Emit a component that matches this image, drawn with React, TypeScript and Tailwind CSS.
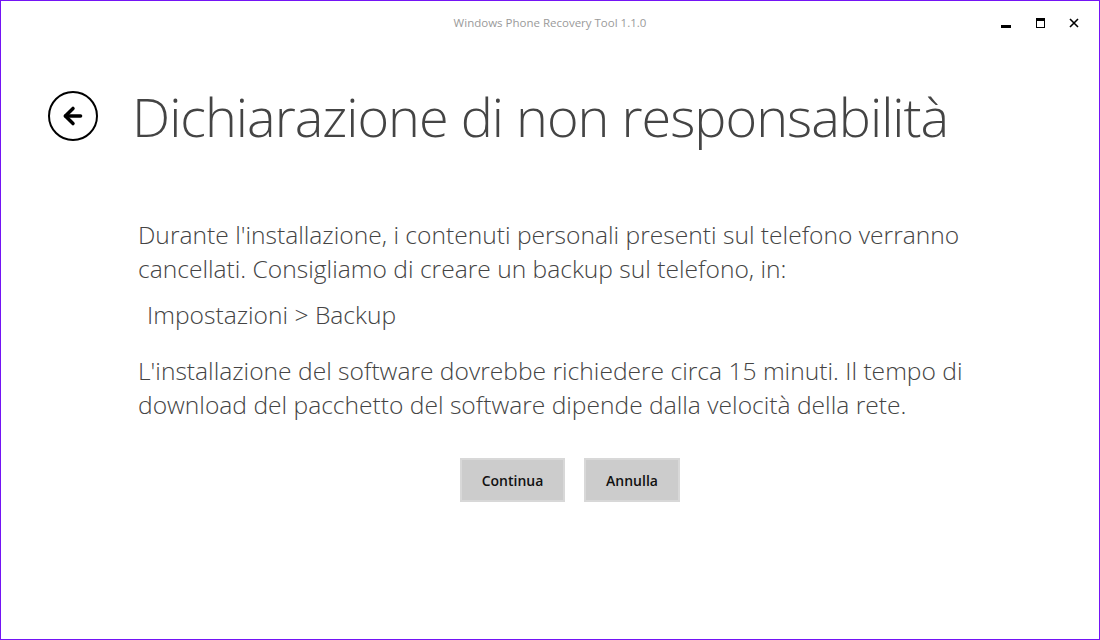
import { ArrowLeft } from 'lucide-react'

export default function App() {
  return (
    <div className="w-[1100px] h-[640px] bg-white border border-[#7414f5] flex flex-col font-['Open_Sans',sans-serif] overflow-hidden">
      {/* Title bar */}
      <div className="h-[44px] flex items-start relative">
        <div className="flex-1 text-center pt-[13px] text-[11.5px] text-[#9a9a9a]">Windows Phone Recovery Tool 1.1.0</div>
        <div className="absolute right-0 top-0 flex items-center h-[44px] pr-[18px] gap-[20px]">
          <div className="w-[14px] h-[14px] flex items-end justify-center pb-[2px]">
            <div className="w-[10px] h-[3px] bg-black" />
          </div>
          <div className="w-[14px] h-[14px] flex items-center justify-center">
            <div className="w-[9px] h-[10px] border border-black border-t-[3px]" />
          </div>
          <svg width="14" height="14" viewBox="0 0 14 14">
            <path d="M3 3 L11 11 M11 3 L3 11" stroke="black" strokeWidth="1.6" />
          </svg>
        </div>
      </div>

      {/* Header */}
      <div className="flex items-center pl-[47px] mt-[44px]">
        <div className="w-[50px] h-[50px] rounded-full border-[2px] border-black flex items-center justify-center">
          <ArrowLeft className="w-[26px] h-[26px] text-black" strokeWidth={3.2} />
        </div>
        <h1 className="ml-[34px] text-[54px] font-light text-[#444] leading-none tracking-[-1px]">
          Dichiarazione di non responsabilità
        </h1>
      </div>

      {/* Body */}
      <div className="pl-[137px] pr-[100px] mt-[75px] text-[24.6px] font-light text-[#444] leading-[34px]">
        <p>Durante l'installazione, i contenuti personali presenti sul telefono verranno cancellati. Consigliamo di creare un backup sul telefono, in:</p>
        <p className="mt-[12px] pl-[9px]">Impostazioni &gt; Backup</p>
        <p className="mt-[22px]">L'installazione del software dovrebbe richiedere circa 15 minuti. Il tempo di download del pacchetto del software dipende dalla velocità della rete.</p>
      </div>

      <div className="flex justify-center gap-[19px] mt-[36px] pl-[40px]">
        <button className="w-[105px] h-[44px] bg-[#cccccc] border-2 border-[#d8d8d8] text-[14px] font-semibold text-[#111]">Continua</button>
        <button className="w-[96px] h-[44px] bg-[#cccccc] border-2 border-[#d8d8d8] text-[14px] font-semibold text-[#111]">Annulla</button>
      </div>
    </div>
  )
}
